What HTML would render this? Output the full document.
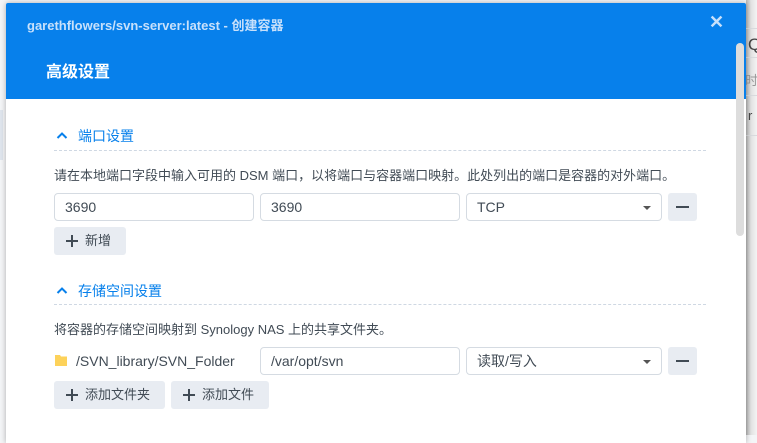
<!DOCTYPE html>
<html><head><meta charset="utf-8"><style>
*{box-sizing:border-box;margin:0;padding:0}
body{width:757px;height:435px;overflow:hidden;background:#f4f5f7;font-family:"Liberation Sans","Noto Sans CJK SC",sans-serif;position:relative}
.bg{position:absolute;left:746px;top:0;width:11px;height:435px;background:linear-gradient(90deg,#b8b8b8,#e2e2e2 5px,#f3f3f3)}
.bgline{position:absolute;left:746px;width:11px;height:1px;background:#d8dadd}
.bgt{position:absolute;left:748px;color:#444;font-size:14px;white-space:nowrap}
.dlg{position:absolute;left:6px;top:3px;width:740px;height:440px;background:#fff;box-shadow:0 0 6px rgba(0,0,0,.3);overflow:hidden;border-radius:2px 2px 0 0}
.hdr{position:absolute;left:0;top:0;width:740px;height:96px;background:#0780eb}
.title{position:absolute;left:21px;top:12px;color:#c7e0fb;font-size:13px;font-weight:bold}
.close{position:absolute;left:703px;top:9px;color:#c7e0fb;font-size:18px;font-weight:bold}
.h1{position:absolute;left:40px;top:55px;color:#fff;font-size:16px;font-weight:bold}
.sb{position:absolute;left:730px;top:40px;width:8px;height:193px;background:#ddd;border-radius:4px}
.sec{position:absolute;left:48px;color:#0780eb;font-size:14px}
.sec svg{position:absolute;left:2px;top:5px}
.sec span{position:absolute;left:24px;top:0;white-space:nowrap}
.dash{position:absolute;left:48px;width:652px;border-top:1px dashed #cfd8e3}
.desc{position:absolute;left:48px;font-size:13px;color:#414b55;white-space:nowrap}
.inp{position:absolute;height:28px;border:1px solid #d5dbe2;border-radius:4px;font-size:14px;color:#414b55;padding:0 10px;line-height:26px;background:#fff}
.sel::after{content:"";position:absolute;right:10px;top:12px;border:4px solid transparent;border-top:4px solid #555;border-bottom:0}
.btn{position:absolute;height:28px;background:#e8ecf2;border-radius:3px;font-size:13px;color:#414b55;padding-left:31px;line-height:28px;white-space:nowrap}
.btn::before{content:"";position:absolute;left:12px;top:13px;width:12px;height:2px;background:#414b55}
.btn::after{content:"";position:absolute;left:17px;top:8px;width:2px;height:12px;background:#414b55}
.minus{position:absolute;width:29px;height:28px;background:#e8ecf2;border-radius:3px}
.minus::before{content:"";position:absolute;left:8px;top:13px;width:13px;height:2px;background:#414b55}
</style></head><body>
<div style="position:absolute;left:0;top:110px;width:3px;height:50px;background:#e0e6ee"></div>
<div class="bg"></div>
<div class="bgline" style="top:28px"></div><div class="bgline" style="top:57px"></div><div class="bgline" style="top:95px"></div><div class="bgline" style="top:135px"></div>
<div class="bgt" style="top:35px;font-size:17px">Q</div>
<div class="bgt" style="top:70px;color:#999;font-size:13px;left:745px">时间</div>
<div class="bgt" style="top:108px;font-size:13px">r</div>
<div class="dlg">
<div class="hdr"></div>
<div class="title">garethflowers/svn-server:latest - 创建容器</div>
<div class="close">✕</div>
<div class="h1">高级设置</div>
<div class="sb"></div>

<div class="sec" style="top:123px"><svg width="12" height="8" viewBox="0 0 12 8"><path d="M1.5 7 L6 2.5 L10.5 7" fill="none" stroke="#0780eb" stroke-width="2"/></svg><span>端口设置</span></div>
<div class="dash" style="top:147px"></div>
<div class="desc" style="top:162px">请在本地端口字段中输入可用的 DSM 端口，以将端口与容器端口映射。此处列出的端口是容器的对外端口。</div>
<div class="inp" style="left:48px;top:190px;width:200px">3690</div>
<div class="inp" style="left:254px;top:190px;width:200px">3690</div>
<div class="inp sel" style="left:460px;top:190px;width:196px">TCP</div>
<div class="minus" style="left:662px;top:190px"></div>
<div class="btn" style="left:48px;top:224px;width:72px">新增</div>

<div class="sec" style="top:278px"><svg width="12" height="8" viewBox="0 0 12 8"><path d="M1.5 7 L6 2.5 L10.5 7" fill="none" stroke="#0780eb" stroke-width="2"/></svg><span>存储空间设置</span></div>
<div class="dash" style="top:301px"></div>
<div class="desc" style="top:316px">将容器的存储空间映射到 Synology NAS 上的共享文件夹。</div>
<svg style="position:absolute;left:49px;top:351px" width="12" height="12" viewBox="0 0 12 12"><path d="M0 1h5l1 1.5h6V12H0z" fill="#fdd25a"/></svg>
<div class="desc" style="top:350px;left:70px;font-size:14px">/SVN_library/SVN_Folder</div>
<div class="inp" style="left:254px;top:344px;width:200px">/var/opt/svn</div>
<div class="inp sel" style="left:460px;top:344px;width:196px">读取/写入</div>
<div class="minus" style="left:662px;top:344px"></div>
<div class="btn" style="left:48px;top:378px;width:111px">添加文件夹</div>
<div class="btn" style="left:165px;top:378px;width:98px">添加文件</div>
</div>
</body></html>
